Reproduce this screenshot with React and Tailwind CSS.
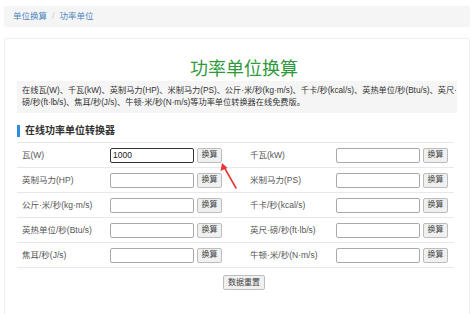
import React from "react";

const font = { fontFamily: '"Liberation Sans", "Noto Sans CJK SC", sans-serif' };

const rows = [
  ["瓦(W)", "千瓦(kW)"],
  ["英制马力(HP)", "米制马力(PS)"],
  ["公斤·米/秒(kg·m/s)", "千卡/秒(kcal/s)"],
  ["英热单位/秒(Btu/s)", "英尺·磅/秒(ft·lb/s)"],
  ["焦耳/秒(J/s)", "牛顿·米/秒(N·m/s)"],
];

function Cell({ label, value, focused, wide }) {
  return (
    <div className="flex items-center">
      <div className={(wide ? "w-[93px]" : "w-[91px]") + " pl-[5px] text-[8.5px] text-[#555] whitespace-nowrap"}>{label}</div>
      <input
        readOnly
        value={value || ""}
        className={
          "w-[84px] h-[15px] px-[2px] text-[8.5px] text-[#222] bg-white outline-none rounded-[2px] " +
          (focused ? "border border-[#333]" : "border border-[#a9a9a9]")
        }
      />
      <button className="ml-[3px] w-[25px] h-[15px] text-[8px] text-[#444] bg-[#f0f0f0] border border-[#bdbdbd] rounded-[2px] flex items-center justify-center">
        换算
      </button>
    </div>
  );
}

export default function App() {
  return (
    <div className="w-[474px] h-[314px] bg-white overflow-hidden relative" style={font}>
      <div className="mx-[4px] mt-[6px] h-[21px] bg-[#f5f5f5] rounded-[3px] flex items-center pl-[9px] text-[8.5px]">
        <span className="text-[#4d86bd]">单位换算</span>
        <span className="mx-[5px] text-[#ccc]">/</span>
        <span className="text-[#4d86bd]">功率单位</span>
      </div>
      <div className="mx-[4px] mt-[11px] h-[300px] border border-[#eee] rounded-[3px] px-[12px]">
        <div className="pt-[18px] pl-[14px] text-center text-[18px] leading-[24px] text-[#2f9a3c]">功率单位换算</div>
        <div className="bg-[#f5f5f5] px-[5px] py-[4px] text-[8.2px] leading-[12px] text-[#333] whitespace-nowrap">
          在线瓦(W)、千瓦(kW)、英制马力(HP)、米制马力(PS)、公斤·米/秒(kg·m/s)、千卡/秒(kcal/s)、英热单位/秒(Btu/s)、英尺·
          <br />
          磅/秒(ft·lb/s)、焦耳/秒(J/s)、牛顿·米/秒(N·m/s)等功率单位转换器在线免费版。
        </div>
        <div className="mt-[12px] mr-[3px] flex items-center border-b border-[#e8e8e8] pb-[5px]">
          <div className="w-[3px] h-[12px] bg-[#2d8ee0]"></div>
          <div className="ml-[5px] text-[10px] font-bold text-[#333] leading-[12px]">在线功率单位转换器</div>
        </div>
        <div className="mr-[3px]">
          {rows.map((r, i) => (
            <div key={i} className="h-[25px] flex items-center border-b border-[#e8e8e8]">
              <Cell label={r[0]} value={i === 0 ? "1000" : ""} focused={i === 0} wide />
              <div className="ml-[23px]">
                <Cell label={r[1]} />
              </div>
            </div>
          ))}
        </div>
        <div className="flex justify-center mt-[7px] pl-[14px]">
          <button className="w-[42px] h-[15px] text-[8px] text-[#444] bg-[#f0f0f0] border border-[#bdbdbd] rounded-[2px] flex items-center justify-center">
            数据重置
          </button>
        </div>
      </div>
      <svg className="absolute left-[214px] top-[158px]" width="28" height="34" viewBox="0 0 28 34">
        <line x1="22" y1="30" x2="10" y2="9" stroke="#e53935" strokeWidth="1.6" strokeLinecap="round" />
        <polygon points="8,5 6.5,13 13.5,10" fill="#e53935" />
      </svg>
    </div>
  );
}
